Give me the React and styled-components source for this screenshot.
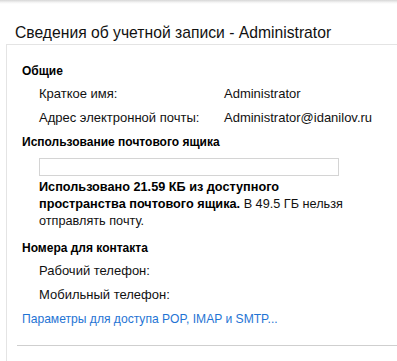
import React from 'react';
import styled, { createGlobalStyle } from 'styled-components';

const GlobalStyle = createGlobalStyle`
  html, body {
    margin: 0;
    padding: 0;
    background: #fff;
  }
  body {
    font-family: "Liberation Sans", Arial, sans-serif;
    color: #111;
  }
`;

const Page = styled.div`
  width: 397px;
  height: 361px;
  overflow: hidden;
  background: #fff;
`;

const TopShadow = styled.div`
  height: 4px;
  background: linear-gradient(#d6d6d6, #f4f4f4 60%, #fff);
`;

const Title = styled.h1`
  margin: 0;
  padding: 0 0 0 15px;
  height: 40px;
  line-height: 58px;
  font-size: 15.7px;
  font-weight: normal;
  color: #111;
`;

const Panel = styled.div`
  margin-left: 6px;
  border-top: 1px solid #e4e4e4;
  border-left: 1px solid #e4e4e4;
  padding-top: 15px;
  height: 320px;
  box-sizing: border-box;
`;

const Content = styled.div`
  padding-left: 15px;
`;

const SectionTitle = styled.div`
  font-size: 12px;
  font-weight: bold;
  line-height: 22px;
  height: 22px;
  margin-top: ${(p) => p.$gap || 0}px;
  color: #000;
`;

const Row = styled.div`
  display: flex;
  height: 24px;
  line-height: 24px;
  font-size: 13px;
  padding-left: 17px;
`;

const Label = styled.span`
  width: 185px;
  flex: none;
`;

const Value = styled.span``;

const UsageBar = styled.div`
  margin: 5px 0 0 17px;
  width: 300px;
  height: 18px;
  box-sizing: border-box;
  border: 1px solid #d4d4d4;
  background: #fff;
`;

const UsageText = styled.p`
  margin: 3px 0 0 17px;
  width: 310px;
  font-size: 12.7px;
  line-height: 17px;

  b {
    color: #000;
  }
`;

const Link = styled.a`
  display: block;
  font-size: 12.1px;
  line-height: 24px;
  color: #1f74d4;
  text-decoration: none;
  cursor: pointer;
`;

const Divider = styled.hr`
  margin: 14px 0 0 10px;
  border: none;
  border-top: 1px solid #cfcfcf;
  height: 0;
`;

export default function App() {
  return (
    <Page>
      <GlobalStyle />
      <TopShadow />
      <Title>Сведения об учетной записи - Administrator</Title>
      <Panel>
        <Content>
          <SectionTitle>Общие</SectionTitle>
          <Row>
            <Label>Краткое имя:</Label>
            <Value>Administrator</Value>
          </Row>
          <Row>
            <Label>Адрес электронной почты:</Label>
            <Value>Administrator@idanilov.ru</Value>
          </Row>

          <SectionTitle $gap={1}>Использование почтового ящика</SectionTitle>
          <UsageBar />
          <UsageText>
            <b>Использовано 21.59 КБ из доступного пространства почтового ящика.</b>{' '}
            В 49.5 ГБ нельзя отправлять почту.
          </UsageText>

          <SectionTitle $gap={7}>Номера для контакта</SectionTitle>
          <Row>
            <Label>Рабочий телефон:</Label>
          </Row>
          <Row>
            <Label>Мобильный телефон:</Label>
          </Row>

          <Link>Параметры для доступа POP, IMAP и SMTP...</Link>
        </Content>
        <Divider />
      </Panel>
    </Page>
  );
}
